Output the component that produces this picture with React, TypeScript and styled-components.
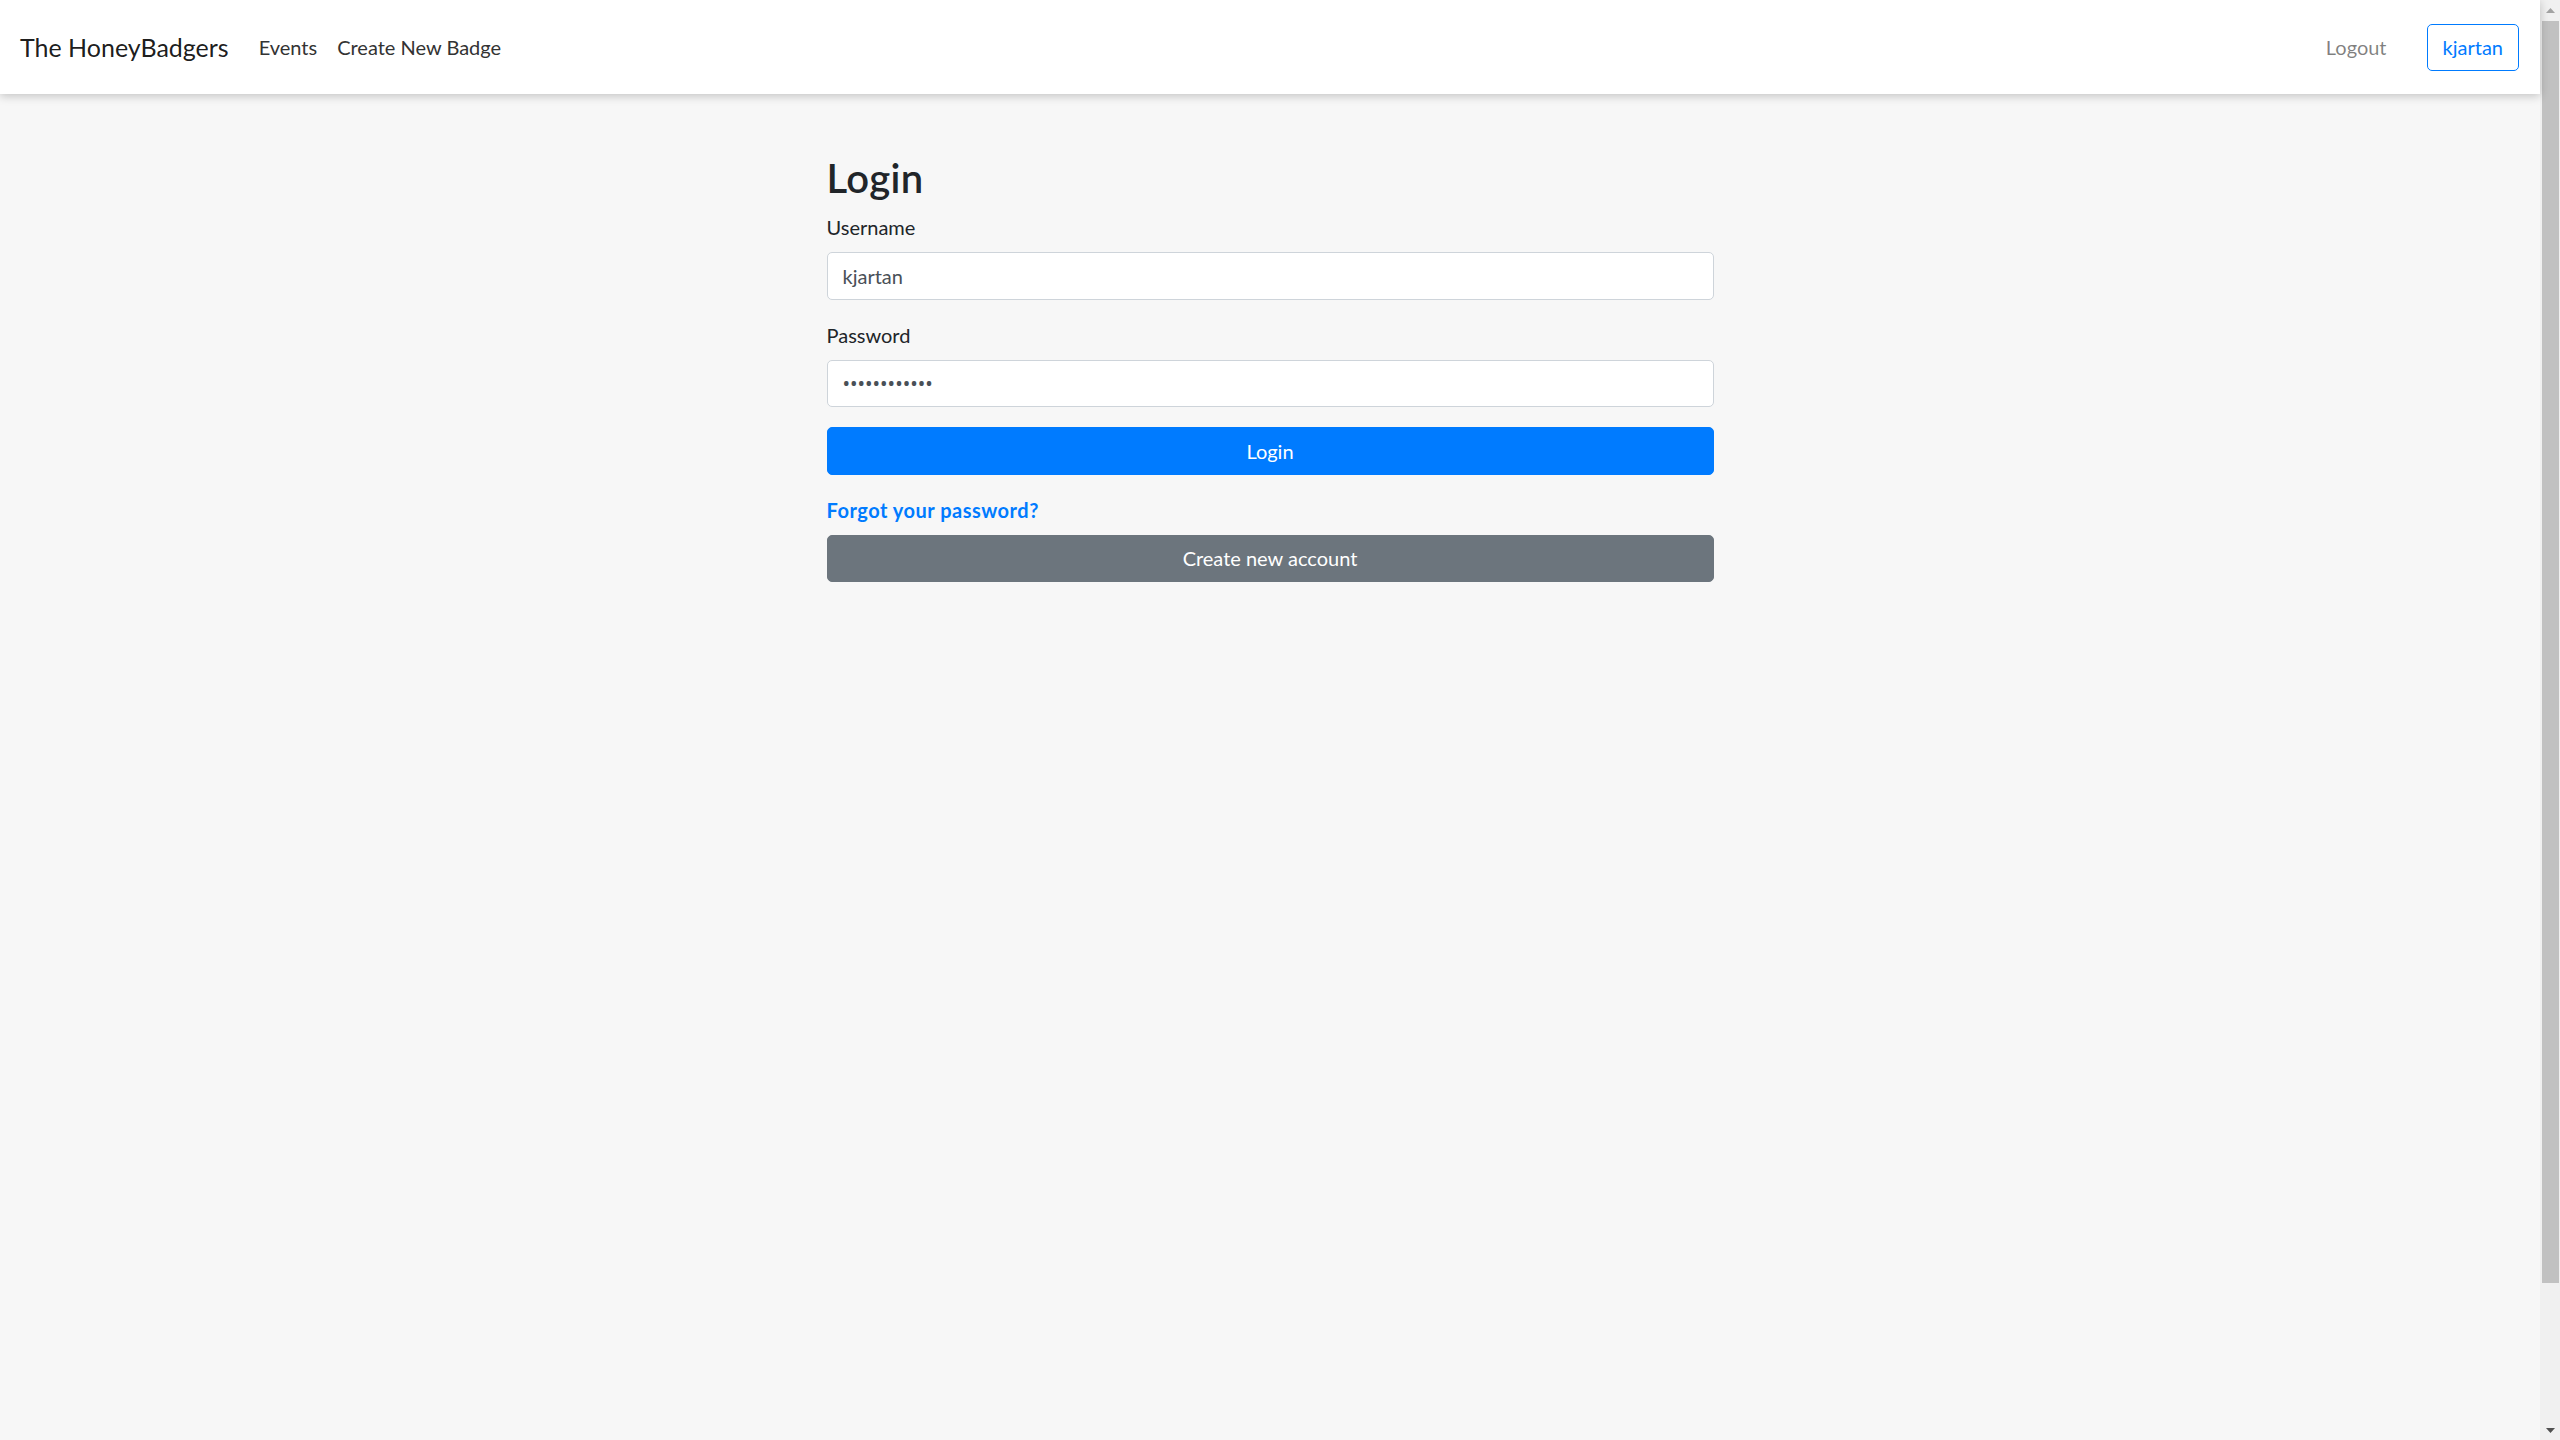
import React from "react";
import styled, { createGlobalStyle } from "styled-components";

const GlobalStyle = createGlobalStyle`
  html, body {
    margin: 0;
    padding: 0;
    background: #f7f7f7;
    font-family: Lato, "Noto Sans", sans-serif;
    color: #212529;
    font-size: 20px;
    line-height: 1.5;
    overflow: hidden;
  }
  * { box-sizing: border-box; }
`;

const Shell = styled.div`
  display: flex;
  height: 100vh;
  overflow: hidden;
`;

const Viewport = styled.div`
  flex: 1;
  min-width: 0;
`;

const ScrollRail = styled.div`
  width: 20px;
  flex-shrink: 0;
  background: #f0f0f0;
  display: flex;
  flex-direction: column;
  align-items: center;
`;

const ArrowButton = styled.div`
  width: 20px;
  height: 20px;
  display: flex;
  align-items: center;
  justify-content: center;
`;

const Thumb = styled.div`
  width: 17px;
  height: 1262px;
  margin-top: 1px;
  background: #c1c1c1;
`;

const RailSpacer = styled.div`
  flex: 1;
`;

const NavBar = styled.nav`
  position: relative;
  z-index: 2;
  height: 94px;
  background: #ffffff;
  display: flex;
  align-items: center;
  justify-content: space-between;
  padding: 0 21px 0 20px;
  box-shadow: 0 2px 9px rgba(0, 0, 0, 0.22);
`;

const NavGroup = styled.div`
  display: flex;
  align-items: center;
`;

const Brand = styled.a`
  font-size: 25px;
  line-height: 37px;
  color: rgba(0, 0, 0, 0.9);
  text-decoration: none;
  margin-right: 20px;
  padding-top: 1px;
`;

const NavLink = styled.a<{ $muted?: boolean }>`
  font-size: 20px;
  line-height: 30px;
  padding: 0 10px;
  color: ${(p) => (p.$muted ? "rgba(0,0,0,0.5)" : "#333333")};
  text-decoration: none;
`;

const UserButton = styled.button`
  margin-left: 30px;
  font-family: inherit;
  font-size: 20px;
  line-height: 30px;
  height: 47px;
  padding: 0 15px;
  color: #007bff;
  background: transparent;
  border: 1px solid #007bff;
  border-radius: 5px;
`;

const Main = styled.main`
  width: 887px;
  margin: 60px auto 0;
  display: flex;
  flex-direction: column;
`;

const Title = styled.h2`
  margin: 0 0 10px;
  font-size: 40px;
  line-height: 48px;
  font-weight: 600;
  letter-spacing: 0.3px;
  color: #212529;
`;

const Field = styled.div`
  display: flex;
  flex-direction: column;
  margin-bottom: 20px;
`;

const Label = styled.label`
  font-size: 20px;
  line-height: 30px;
  margin-bottom: 10px;
`;

const Input = styled.input<{ $masked?: boolean }>`
  height: 47.5px;
  padding: 7.5px 15px;
  font-family: ${(p) => (p.$masked ? `"Noto Sans", sans-serif` : "inherit")};
  font-size: 20px;
  line-height: 30px;
  color: #495057;
  background: #ffffff;
  border: 1px solid #ced4da;
  border-radius: 5px;
  outline: none;
`;

const Button = styled.button<{ $variant: "primary" | "secondary" }>`
  width: 100%;
  height: 47.5px;
  padding: 7.5px 15px;
  font-family: inherit;
  font-size: 20px;
  line-height: 30px;
  color: #ffffff;
  background: ${(p) => (p.$variant === "primary" ? "#007bff" : "#6c757d")};
  border: 1px solid ${(p) => (p.$variant === "primary" ? "#007bff" : "#6c757d")};
  border-radius: 5px;
  text-align: center;
`;

const LinkRow = styled.div`
  margin: 20px 0 10px;
  line-height: 30px;
`;

const ForgotLink = styled.a`
  font-size: 20px;
  font-weight: 700;
  letter-spacing: 0.5px;
  color: #007bff;
  text-decoration: none;
`;

const Arrow = ({ up, color }: { up?: boolean; color: string }) => (
  <svg width="9" height="5" viewBox="0 0 9 5">
    <polygon points={up ? "0,5 9,5 4.5,0" : "0,0 9,0 4.5,5"} fill={color} />
  </svg>
);

export default function App() {
  return (
    <>
      <GlobalStyle />
      <Shell>
        <Viewport>
          <NavBar>
            <NavGroup>
              <Brand href="#">The HoneyBadgers</Brand>
              <NavLink href="#">Events</NavLink>
              <NavLink href="#">Create New Badge</NavLink>
            </NavGroup>
            <NavGroup>
              <NavLink href="#" $muted>
                Logout
              </NavLink>
              <UserButton>kjartan</UserButton>
            </NavGroup>
          </NavBar>
          <Main>
            <Title>Login</Title>
            <Field>
              <Label>Username</Label>
              <Input type="text" defaultValue="kjartan" />
            </Field>
            <Field>
              <Label>Password</Label>
              <Input $masked type="password" defaultValue="kjartan12345" />
            </Field>
            <Button $variant="primary">Login</Button>
            <LinkRow>
              <ForgotLink href="#">Forgot your password?</ForgotLink>
            </LinkRow>
            <Button $variant="secondary">Create new account</Button>
          </Main>
        </Viewport>
        <ScrollRail>
          <ArrowButton>
            <Arrow up color="#a3a3a3" />
          </ArrowButton>
          <Thumb />
          <RailSpacer />
          <ArrowButton>
            <Arrow color="#505050" />
          </ArrowButton>
        </ScrollRail>
      </Shell>
    </>
  );
}
